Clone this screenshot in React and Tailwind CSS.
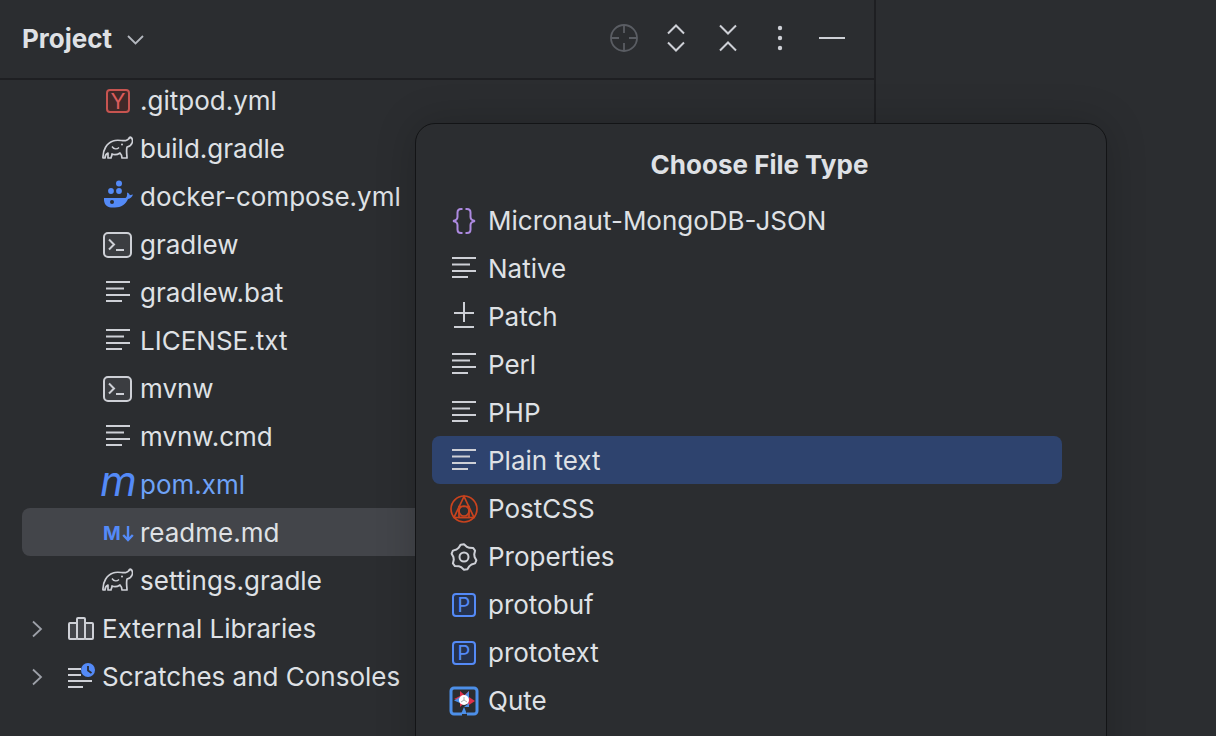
import React from "react";

const gear = (() => {
  let d = "";
  const n = 6, cx = 14, cy = 14;
  const pts = [];
  for (let i = 0; i < n * 4; i++) {
    const a = (i / (n * 4)) * Math.PI * 2 - Math.PI / 2 - Math.PI / 12;
    const k = i % 4;
    const r = k === 0 || k === 1 ? 12.8 : 10.6;
    pts.push([cx + r * Math.cos(a), cy + r * Math.sin(a)]);
  }
  pts.forEach((p, i) => {
    d += (i ? "L" : "M") + p[0].toFixed(2) + " " + p[1].toFixed(2);
  });
  return d + "Z";
})();

const S = ({ w = 32, h = 32, vb, children, className = "" }) => (
  <svg width={w} height={h} viewBox={vb || `0 0 ${w} ${h}`} fill="none" className={`shrink-0 ${className}`}>
    {children}
  </svg>
);

const TextIcon = () => (
  <S w={32} h={28}>
    <g stroke="#ced0d6" strokeWidth="2">
      <path d="M4 3h24M4 9.500h18M4 16h24M4 22h16" />
    </g>
  </S>
);
const TreeText = () => (
  <S w={28} h={28}>
    <g stroke="#ced0d6" strokeWidth="2">
      <path d="M4 3h24M4 9.500h18M4 16h24M4 22h16" />
    </g>
  </S>
);
const YIcon = () => (
  <div className="w-[24px] h-[24px] ml-[4px] rounded-[4px] border-2 border-[#c75450] bg-[#402929] flex items-center justify-center text-[#db5c5c] text-[22px] leading-none font-normal">
    Y
  </div>
);
const Gradle = () => (
  <S w={32} h={26} className="-ml-[1px]">
    <path
      d="M2 22C1.500 14 6 7 12 5C17 3 22 5.500 25 4.500C28 3.500 28 2 30 1.500C33 4 31.500 10 26 11C25 15 26 19 26 22H21C21 20 20 18 19 17C16 19 13 19 11 18C11 20 10 21 10 22H7C7 20 7 18 7 17C5 18 4 20 4 22Z"
      stroke="#ced0d6"
      strokeWidth="1.700"
      strokeLinejoin="round"
    />
    <circle cx="21" cy="8.500" r="1" fill="#ced0d6" />
    <path d="M30 1.500c-1-1-2.500 0-2 1.500" stroke="#ced0d6" strokeWidth="1.400" />
    <path d="M11 10.500c2 3 5 3 7 1" stroke="#ced0d6" strokeWidth="1.400" />
  </S>
);
const Docker = () => (
  <S w={32} h={34}>
    <g fill="#548af7">
      <circle cx="17" cy="3.500" r="3" />
      <circle cx="9" cy="11" r="2.900" />
      <circle cx="17" cy="11" r="2.900" />
      <path d="M2 18H23C24.500 18 25.500 16 25 12.500C26.500 13 27.500 14 27.800 15.200L31 14.500C30 17 28.500 18.500 26 19C24 24 19 27.500 13 27.500H9C5 27.500 1.500 24 2 18Z" />
    </g>
    <circle cx="10" cy="22" r="2" fill="#2b2d30" />
  </S>
);
const Term = () => (
  <S w={30} h={28}>
    <rect x="2" y="2" width="27" height="24" rx="4" fill="#3b3d41" stroke="#ced0d6" strokeWidth="2" />
    <path d="M7 8.500l5 5-5 5" stroke="#ced0d6" strokeWidth="2" />
    <path d="M14 19h8" stroke="#ced0d6" strokeWidth="2" />
  </S>
);
const Maven = () => (
  <div className="w-[31px] h-[32px] flex items-center justify-center text-[#548af7] text-[42px] leading-[32px] italic font-normal -mt-[9px] ml-[1px]">
    m
  </div>
);
const Md = () => (
  <div className="flex items-center text-[#548af7] font-bold text-[19px] leading-none ml-[1px]">
    <span>M</span>
    <S w={12} h={20} className="ml-[1px]">
      <path d="M6 3v14M1.200 12l4.800 5 4.800-5" stroke="#548af7" strokeWidth="2.400" />
    </S>
  </div>
);
const Libs = () => (
  <S w={28} h={26}>
    <g fill="#43454a" stroke="#ced0d6" strokeWidth="2" strokeLinejoin="round">
      <rect x="2" y="7" width="8" height="16" rx="1" />
      <rect x="10" y="2" width="8" height="21" rx="1" />
      <rect x="18" y="7" width="8" height="16" rx="1" />
    </g>
  </S>
);
const Scratch = () => (
  <S w={30} h={28}>
    <g stroke="#ced0d6" strokeWidth="2">
      <path d="M1 6h13M1 12h13M1 18h24M1 24h15" />
    </g>
    <circle cx="21" cy="7" r="7" fill="#548af7" />
    <path d="M21 3v4.500l3.500 2.500" stroke="#2b2d30" strokeWidth="1.800" />
  </S>
);
const Chevron = () => (
  <S w={14} h={18}>
    <path d="M2 1.500l8 7.500-8 7.500" stroke="#9da0a8" strokeWidth="1.800" />
  </S>
);

const Row = ({ children, icon, active, blue }) => (
  <div className={`h-12 pt-[2px] flex items-center pl-[80px] ml-[22px] rounded-l-lg ${active ? "bg-[#43454a]" : ""}`}>
    <div className="w-[31px] flex justify-start shrink-0">{icon}</div>
    <span className={`ml-[7px] ${blue ? "text-[#6ea2f7]" : ""}`}>{children}</span>
  </div>
);
const RootRow = ({ children, icon }) => (
  <div className="h-12 pt-[2px] flex items-center pl-[31px]">
    <Chevron />
    <div className="ml-[22px] w-[30px] flex shrink-0">{icon}</div>
    <span className="ml-[5px]">{children}</span>
  </div>
);

const Braces = () => (
  <S w={32} h={28}>
    <path
      d="M14.500 2H13C10.500 2 9.500 3 9.500 5.500V10C9.500 12 8 13.500 5 14C8 14.500 9.500 16 9.500 18V22.500C9.500 25 10.500 26 13 26H14.500M17.500 2H19C21.500 2 22.500 3 22.500 5.500V10C22.500 12 24 13.500 27 14C24 14.500 22.500 16 22.500 18V22.500C22.500 25 21.500 26 19 26H17.500"
      stroke="#ad8ae0"
      strokeWidth="2"
    />
  </S>
);
const Patch = () => (
  <S w={32} h={32}>
    <path d="M16 1v20M6 12h20M6 26h20" stroke="#ced0d6" strokeWidth="2" />
  </S>
);
const PostCss = () => (
  <S w={32} h={30}>
    <g stroke="#c9431e" strokeWidth="1.700">
      <circle cx="16" cy="15" r="13" />
      <path d="M16 2.500L6 23.500h20Z" />
      <circle cx="16" cy="17" r="5" />
      <path d="M11 12.500h10v11h-10Z" />
    </g>
  </S>
);
const Props = () => (
  <S w={32} h={28}>
    <g transform="translate(2 0)" stroke="#ced0d6" strokeWidth="2" strokeLinejoin="round">
      <path d={gear} />
      <circle cx="14" cy="14" r="4.500" />
    </g>
  </S>
);
const PIcon = () => (
  <div className="w-[24px] h-[24px] ml-[4px] rounded-[4px] border-2 border-[#548af7] bg-[#25324d] flex items-center justify-center text-[#548af7] text-[20px] leading-none">
    P
  </div>
);
const Qute = () => (
  <S w={32} h={30}>
    <path d="M14 28H6a3 3 0 0 1-3-3V5a3 3 0 0 1 3-3h20a3 3 0 0 1 3 3v20a3 3 0 0 1-3 3h-7" stroke="#4d8fe8" strokeWidth="3" />
    <path d="M16 21l-3 7h6Z" fill="#4d8fe8" />
    <path d="M12 5l4.500 4 4.500-4v6l6 4-6 4-4.500-2-4.500 4v-6l-6-2 6-3Z" fill="#e0304a" />
    <path d="M21 5l-4 4 4 4ZM6 14.500l6-3.500v6ZM21 17l-5 4h5Z" fill="#4d8fe8" />
    <circle cx="16" cy="14" r="5" fill="#fff" />
    <path d="M16 11v3l-3 2M16 14l3 2" stroke="#9a9a9a" strokeWidth="0.800" />
  </S>
);

const tree = [
  [".gitpod.yml", <YIcon />],
  ["build.gradle", <Gradle />],
  ["docker-compose.yml", <Docker />],
  ["gradlew", <Term />],
  ["gradlew.bat", <TreeText />],
  ["LICENSE.txt", <TreeText />],
  ["mvnw", <Term />],
  ["mvnw.cmd", <TreeText />],
];

const types = [
  ["Micronaut-MongoDB-JSON", <Braces />],
  ["Native", <TextIcon />],
  ["Patch", <Patch />],
  ["Perl", <TextIcon />],
  ["PHP", <TextIcon />],
  ["Plain text", <TextIcon />, true],
  ["PostCSS", <PostCss />],
  ["Properties", <Props />],
  ["protobuf", <PIcon />],
  ["prototext", <PIcon />],
  ["Qute", <Qute />],
];

export default function App() {
  return (
    <div
      className="relative flex w-[1216px] h-[736px] overflow-hidden bg-[#2b2d30] text-[#dfe1e5] text-[26px] leading-[32px]"
      style={{ fontFamily: "Inter, sans-serif" }}
    >
      <div className="w-[876px] shrink-0 border-r-2 border-[#1e1f22] flex flex-col">
        <div className="h-[80px] shrink-0 border-b-2 border-[#1e1f22] flex items-center pl-[22px] pb-[2px]">
          <span className="font-bold mt-[2px]">Project</span>
          <S w={18} h={12} className="ml-[15px] mt-[2px]">
            <path d="M1 3l7.500 7.500L16 3" stroke="#b4b8bf" strokeWidth="1.800" />
          </S>
          <div className="ml-auto flex items-center">
            <S w={30} h={30} className="mr-[22px]">
              <g stroke="#5a5d63" strokeWidth="1.800">
                <circle cx="15" cy="15" r="13" />
                <path d="M15 2v8M15 20v8M2 15h8M20 15h8" />
              </g>
            </S>
            <S w={30} h={30} className="mr-[22px]">
              <path d="M7 10.500l8-8 8 8M7 19.500l8 8 8-8" stroke="#ced0d6" strokeWidth="2" />
            </S>
            <S w={30} h={30} className="mr-[22px]">
              <path d="M7 2.500l8 8 8-8M7 27.500l8-8 8 8" stroke="#ced0d6" strokeWidth="2" />
            </S>
            <S w={30} h={30} className="mr-[24px]">
              <g fill="#ced0d6">
                <circle cx="15" cy="5" r="2.200" />
                <circle cx="15" cy="15" r="2.200" />
                <circle cx="15" cy="25" r="2.200" />
              </g>
            </S>
            <S w={26} h={30} className="mr-[29px]">
              <path d="M0 15h26" stroke="#ced0d6" strokeWidth="2" />
            </S>
          </div>
        </div>
        <div className="flex-1 overflow-hidden">
          <div className="-mt-[4px]">
            {tree.map(([n, i]) => (
              <Row key={n} icon={i}>
                {n}
              </Row>
            ))}
            <Row icon={<Maven />} blue>
              pom.xml
            </Row>
            <Row icon={<Md />} active>
              readme.md
            </Row>
            <Row icon={<Gradle />}>settings.gradle</Row>
            <RootRow icon={<Libs />}>External Libraries</RootRow>
            <RootRow icon={<Scratch />}>Scratches and Consoles</RootRow>
          </div>
        </div>
      </div>

      <div className="absolute left-[415px] top-[123px] w-[692px] h-[680px] bg-[#2b2d30] rounded-[20px] border border-[#131416] shadow-[0_0_40px_rgba(0,0,0,0.2)] px-[16px]">
        <div className="h-[72px] flex items-center justify-center font-bold text-[26px] pt-[9px] text-center -ml-[3px]">Choose File Type</div>
        {types.map(([n, i, sel]) => (
          <div key={n} className={`h-12 pt-[2px] w-[630px] flex items-center rounded-lg pl-[16px] ${sel ? "bg-[#2e436e]" : ""}`}>
            <div className="w-[32px] flex shrink-0">{i}</div>
            <span className="ml-[8px]">{n}</span>
          </div>
        ))}
      </div>
    </div>
  );
}
